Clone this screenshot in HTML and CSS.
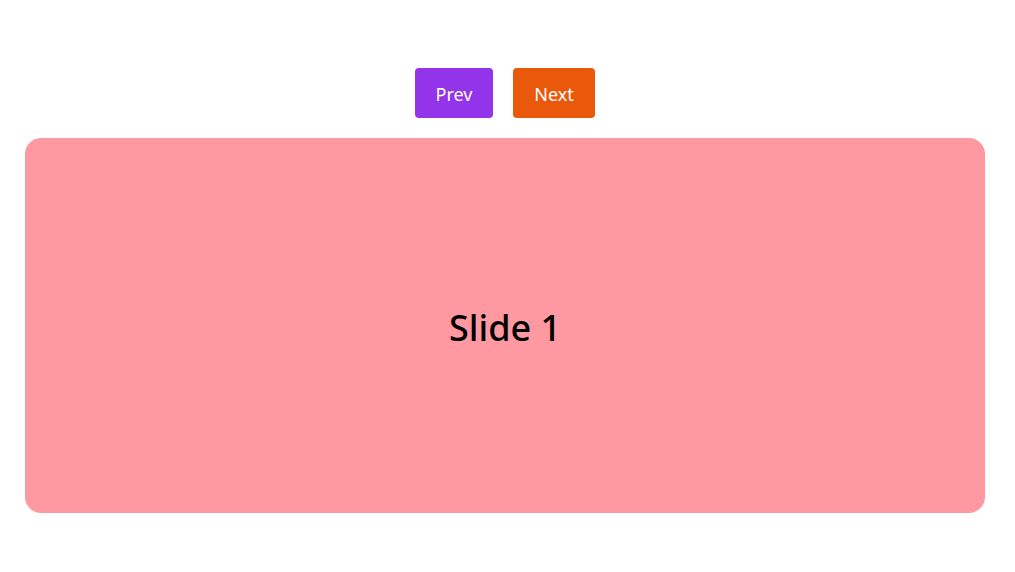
FILE: index.html
```html
<!DOCTYPE html>
<html>
<head>
<meta charset="utf-8">
<link rel="stylesheet" href="styles.css">
</head>
<body>
<div class="app">
  <div class="controls">
    <button class="btn btn-prev">Prev</button>
    <button class="btn btn-next">Next</button>
  </div>
  <div class="slide">Slide 1</div>
</div>
</body>
</html>
```

FILE: styles.css
```css
html, body {
  margin: 0;
  padding: 0;
  background: #ffffff;
}
body {
  font-family: "Noto Sans", "Open Sans", sans-serif;
}
.app {
  padding: 68px 30px 0 25px;
}
.controls {
  display: flex;
  justify-content: center;
  gap: 20px;
  margin-bottom: 20px;
}
.btn {
  border: none;
  border-radius: 4px;
  color: #ffffff;
  font-family: "Noto Sans", "Open Sans", sans-serif;
  font-size: 18px;
  height: 50px;
  padding: 2px 0 0;
  cursor: pointer;
}
.btn-prev {
  background: #9333ea;
  width: 78px;
}
.btn-next {
  background: #ea580c;
  width: 82px;
}
.slide {
  height: 375px;
  box-sizing: border-box;
  padding-top: 4px;
  border-radius: 16px;
  background: #ff99a1;
  display: flex;
  align-items: center;
  justify-content: center;
  font-size: 36px;
  font-weight: 500;
  color: #000000;
}
```
